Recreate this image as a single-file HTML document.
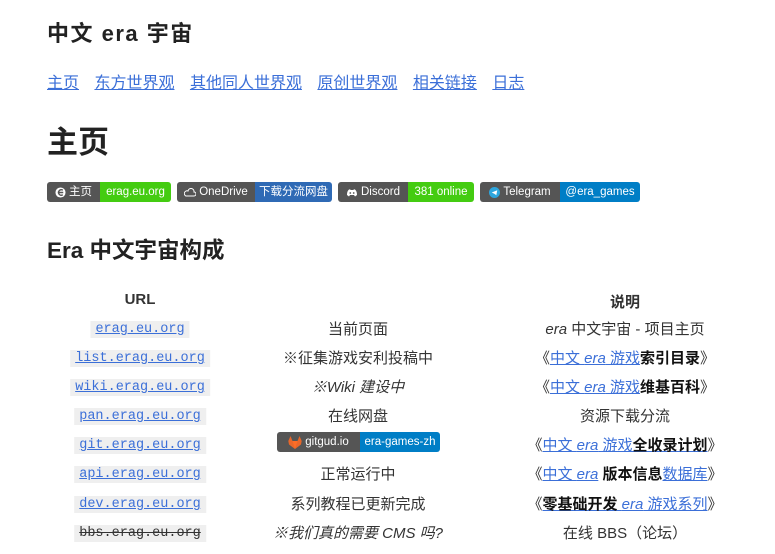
<!DOCTYPE html>
<html><head><meta charset="utf-8"><style>
body{margin:0;background:#fff;color:#333;font-family:"Liberation Sans","Noto Sans CJK SC",sans-serif;width:775px;height:554px;overflow:hidden;position:relative}
.a{position:absolute;white-space:nowrap}
a{color:#3b6fd8;text-decoration:underline}
.t{font-size:22px;font-weight:bold;left:47px;top:16px;letter-spacing:1.5px;color:#222}
.nav{top:69px;left:47px;font-size:16px}
.nav a{margin-right:11px}
h1{position:absolute;margin:0;left:47px;top:117px;font-size:31px;color:#222}
h2{position:absolute;margin:0;left:47px;top:233px;font-size:22.5px;color:#222}
.b{position:absolute;top:182px;height:20px;display:flex;border-radius:3px;overflow:hidden;font-size:11.5px;color:#fff;line-height:20px}
.b span{padding:0 4px;display:flex;align-items:center;justify-content:center;gap:3px}
.g{background:#555}
.c{position:absolute;transform:translateX(-50%);white-space:nowrap;font-size:15px}
code{font-family:"Liberation Mono",monospace;background:#efefef;padding:1px 5px;font-size:13.5px}
code a{color:#3b6fd8}
b{color:#111}
</style></head><body>
<div class="a t">中文 era 宇宙</div>
<div class="a nav"><a>主页</a> <a>东方世界观</a> <a>其他同人世界观</a> <a>原创世界观</a> <a>相关链接</a> <a>日志</a></div>
<h1>主页</h1>
<div class="b" style="left:47px;width:124px"><span class="g" style="width:45px"><svg width="11" height="11" viewBox="0 0 12 12"><circle cx="6" cy="6" r="5.5" fill="#fff"/><path d="M3 6h6M8.5 3.5A3 3 0 1 0 8.5 8.5" stroke="#555" stroke-width="1.6" fill="none"/></svg>主页</span><span style="background:#4c1;flex:1">erag.eu.org</span></div>
<div class="b" style="left:177px;width:155px"><span class="g" style="width:70px"><svg width="12" height="9" viewBox="0 0 12 9"><path d="M2 8h8a2 2 0 0 0 0-4a3 3 0 0 0-6-1a2.5 2.5 0 0 0-2 5z" stroke="#fff" fill="none"/></svg>OneDrive</span><span style="background:#2f6ab5;flex:1">下载分流网盘</span></div>
<div class="b" style="left:338px;width:136px"><span class="g" style="width:62px"><svg width="12" height="9" viewBox="0 0 12 9"><path d="M1 7C1 4 2 2 3.5 1.3L5 2h2l1.5-.7C10 2 11 4 11 7L9 8.5 8 7H4L3 8.5z" fill="#fff"/><circle cx="4.3" cy="5" r=".9" fill="#555"/><circle cx="7.7" cy="5" r=".9" fill="#555"/></svg>Discord</span><span style="background:#4c1;flex:1">381 online</span></div>
<div class="b" style="left:480px;width:160px"><span class="g" style="width:72px"><svg width="11" height="11" viewBox="0 0 12 12"><circle cx="6" cy="6" r="6" fill="#2ea6de"/><path d="M3 6l6-2.5L8 9 6 7.5z" fill="#fff"/></svg>Telegram</span><span style="background:#007ec6;flex:1">@era_games</span></div>
<h2>Era 中文宇宙构成</h2>
<div class="c" style="left:140px;top:291px;font-weight:bold;color:#333">URL</div>
<div class="c" style="left:625px;top:291px;font-weight:bold">说明</div>

<div class="c" style="left:140px;top:319px"><code><a>erag.eu.org</a></code></div>
<div class="c" style="left:358px;top:318px">当前页面</div>
<div class="c" style="left:625px;top:318px"><i>era</i> 中文宇宙 - 项目主页</div>

<div class="c" style="left:140px;top:348px"><code><a>list.erag.eu.org</a></code></div>
<div class="c" style="left:358px;top:347px">※征集游戏安利投稿中</div>
<div class="c" style="left:625px;top:347px">《<a>中文 <i>era</i> 游戏</a><b>索引目录</b>》</div>

<div class="c" style="left:140px;top:377px"><code><a>wiki.erag.eu.org</a></code></div>
<div class="c" style="left:358px;top:376px"><i>※Wiki 建设中</i></div>
<div class="c" style="left:625px;top:376px">《<a>中文 <i>era</i> 游戏</a><b>维基百科</b>》</div>

<div class="c" style="left:140px;top:406px"><code><a>pan.erag.eu.org</a></code></div>
<div class="c" style="left:358px;top:405px">在线网盘</div>
<div class="c" style="left:625px;top:405px">资源下载分流</div>

<div class="c" style="left:140px;top:435px"><code><a>git.erag.eu.org</a></code></div>
<div class="b" style="left:277px;top:432px;width:163px"><span class="g" style="width:75px"><svg width="14" height="13" viewBox="0 0 14 13"><path d="M7 13L1 8.5 0.3 5 2.5 0 4.5 5h5L11.5 0 13.7 5 13 8.5z" fill="#e8672a"/><path d="M7 13L4.5 5h5z" fill="#fc6d26"/></svg>gitgud.io</span><span style="background:#007ec6;flex:1">era-games-zh</span></div>
<div class="c" style="left:625px;top:434px">《<a>中文 <i>era</i> 游戏<b>全收录计划</b></a>》</div>

<div class="c" style="left:140px;top:464px"><code><a>api.erag.eu.org</a></code></div>
<div class="c" style="left:358px;top:463px">正常运行中</div>
<div class="c" style="left:625px;top:463px">《<a>中文 <i>era</i></a> <b>版本信息</b><a>数据库</a>》</div>

<div class="c" style="left:140px;top:494px"><code><a>dev.erag.eu.org</a></code></div>
<div class="c" style="left:358px;top:493px">系列教程已更新完成</div>
<div class="c" style="left:625px;top:493px">《<a><b>零基础开发</b> <i>era</i> 游戏系列</a>》</div>

<div class="c" style="left:140px;top:523px"><code style="color:#333;text-decoration:line-through">bbs.erag.eu.org</code></div>
<div class="c" style="left:358px;top:522px"><i>※我们真的需要 CMS 吗?</i></div>
<div class="c" style="left:625px;top:522px">在线 BBS（论坛）</div>
</body></html>
